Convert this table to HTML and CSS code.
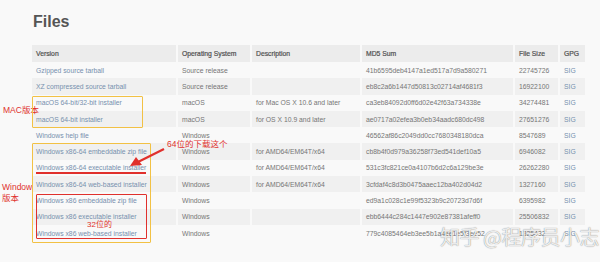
FILE: index.html
```html
<!DOCTYPE html>
<html lang="zh">
  <head>
    <meta charset="UTF-8" />
    <title>Files</title>
    <link rel="stylesheet" href="styles.css">
  </head>
  <body>
    <div class="page">
      <h1 class="title">Files</h1>
      <table class="files">
        <colgroup>
          <col class="c-ver"><col class="c-os"><col class="c-desc"><col class="c-md5"><col class="c-size"><col class="c-gpg">
        </colgroup>
        <thead>
          <tr><th>Version</th><th>Operating System</th><th>Description</th><th>MD5 Sum</th><th>File Size</th><th>GPG</th></tr>
        </thead>
        <tbody>
          <tr><td><a>Gzipped source tarball</a></td><td>Source release</td><td></td><td>41b6595deb4147a1ed517a7d9a580271</td><td>22745726</td><td><a>SIG</a></td></tr>
          <tr><td><a>XZ compressed source tarball</a></td><td>Source release</td><td></td><td>eb8c2a6b1447d50813c02714af4681f3</td><td>16922100</td><td><a>SIG</a></td></tr>
          <tr><td><a>macOS 64-bit/32-bit installer</a></td><td>macOS</td><td>for Mac OS X 10.6 and later</td><td>ca3eb84092d0ff6d02e42f63a734338e</td><td>34274481</td><td><a>SIG</a></td></tr>
          <tr><td><a>macOS 64-bit installer</a></td><td>macOS</td><td>for OS X 10.9 and later</td><td>ae0717a02efea3b0eb34aadc680dc498</td><td>27651276</td><td><a>SIG</a></td></tr>
          <tr><td><a>Windows help file</a></td><td>Windows</td><td></td><td>46562af86c2049dd0cc7680348180dca</td><td>8547689</td><td><a>SIG</a></td></tr>
          <tr><td><a>Windows x86-64 embeddable zip file</a></td><td>Windows</td><td>for AMD64/EM64T/x64</td><td>cb8b4f0d979a36258f73ed541def10a5</td><td>6946082</td><td><a>SIG</a></td></tr>
          <tr><td><a>Windows x86-64 executable installer</a></td><td>Windows</td><td>for AMD64/EM64T/x64</td><td>531c3fc821ce0a4107b6d2c6a129be3e</td><td>26262280</td><td><a>SIG</a></td></tr>
          <tr><td><a>Windows x86-64 web-based installer</a></td><td>Windows</td><td>for AMD64/EM64T/x64</td><td>3cfdaf4c8d3b0475aaec12ba402d04d2</td><td>1327160</td><td><a>SIG</a></td></tr>
          <tr><td><a>Windows x86 embeddable zip file</a></td><td>Windows</td><td></td><td>ed9a1c028c1e99f5323b9c20723d7d6f</td><td>6395982</td><td><a>SIG</a></td></tr>
          <tr><td><a>Windows x86 executable installer</a></td><td>Windows</td><td></td><td>ebb6444c284c1447e902e87381afeff0</td><td>25506832</td><td><a>SIG</a></td></tr>
          <tr><td><a>Windows x86 web-based installer</a></td><td>Windows</td><td></td><td>779c4085464eb3ee5b1a4ee1e5f3ee52</td><td>1325432</td><td><a>SIG</a></td></tr>
        </tbody>
      </table>

      <!-- annotations drawn over the screenshot -->
      <div class="note note-mac">MAC版本</div>
      <div class="note note-win">Window<br>版本</div>
      <div class="note note-64">64位的下载这个</div>
      <div class="note note-32">32位的</div>
      <div class="box box-mac"></div>
      <div class="box box-win"></div>
      <div class="box box-x86"></div>
      <div class="underline"></div>
      <svg class="arrow" width="40" height="24" viewBox="0 0 40 24">
        <line x1="36" y1="2" x2="10" y2="15" stroke="#e0302c" stroke-width="2.2" />
        <polygon points="2,19 8,10 14,18" fill="#e0302c" />
      </svg>
      <div class="watermark">知乎 @程序员小志</div>
    </div>
  </body>
</html>
```

FILE: styles.css
```css
:root {
  --bg: #f9f9f9;
  --stripe: #f0f0f0;
  --head: #ececec;
  --text: #767676;
  --link: #7790ae;
  --red: #e0302c;
  --gold: #f2c144;
}

* {
  box-sizing: border-box;
}

body {
  margin: 0;
  background: var(--bg);
  font-family: "Liberation Sans", Arial, "Noto Sans CJK SC", sans-serif;
}

.page {
  position: relative;
  width: 600px;
  height: 262px;
  padding: 12px 0 0 30px;
}

.title {
  margin: 0 0 0 3px;
  font-size: 16px;
  line-height: 20px;
  color: #555;
  font-weight: 700;
}

/* ───── table ───── */
.files {
  margin-top: 13px;
  width: 557px;
  table-layout: fixed;
  border-collapse: separate;
  border-spacing: 2px 0;
  font-size: 6.8px;
  color: var(--text);
}

.c-ver  { width: 144px; }
.c-os   { width: 72px; }
.c-desc { width: 108px; }
.c-md5  { width: 151px; }
.c-size { width: 43px; }
.c-gpg  { width: 25px; }

.files th {
  height: 17px;
  background: var(--head);
  color: #505050;
  font-weight: 400;
  text-align: left;
  padding: 0 4px;
  -webkit-text-stroke: 0.2px #505050;
}

.files td {
  height: 16.3px;
  padding: 0 4px;
  white-space: nowrap;
  overflow: hidden;
}

.files tbody tr:nth-child(even) td { background: var(--stripe); }
.files a { color: var(--link); }

/* ───── annotations ───── */
.note {
  position: absolute;
  color: var(--red);
  font-size: 8.5px;
  line-height: 11px;
  font-family: "Liberation Sans", "Noto Sans CJK SC", sans-serif;
}
.note-mac { left: 3px; top: 105px; }
.note-win { left: 2px; top: 182px; }
.note-64  { left: 167px; top: 139px; }
.note-32  { left: 87px; top: 219px; font-size: 8px; }

.box {
  position: absolute;
  border-radius: 1px;
}
.box-mac { left: 32px; top: 96px; width: 111px; height: 32px; border: 1.5px solid var(--gold); }
.box-win { left: 32px; top: 143px; width: 119px; height: 100px; border: 1.5px solid var(--gold); }
.box-x86 { left: 36px; top: 194px; width: 111px; height: 45px; border: 1.5px solid var(--red); }

.underline {
  position: absolute;
  left: 36px;
  top: 172px;
  width: 110px;
  height: 1.5px;
  background: var(--red);
}

.arrow {
  position: absolute;
  left: 128px;
  top: 147px;
}

.watermark {
  position: absolute;
  left: 440px;
  top: 226px;
  font-size: 20px;
  line-height: 22px;
  font-family: "Noto Sans CJK SC", sans-serif;
  color: rgba(255, 255, 255, 0.85);
  text-shadow: 0 0 1px rgba(0, 0, 0, 0.55);
  letter-spacing: -0.5px;
}
```
